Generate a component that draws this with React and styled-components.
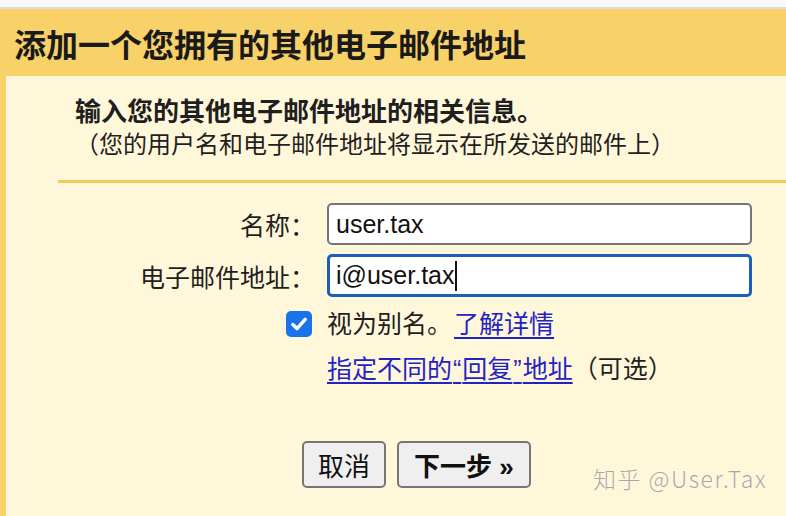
import React from 'react';
import styled, { createGlobalStyle } from 'styled-components';

const GlobalStyle = createGlobalStyle`
  html, body {
    margin: 0;
    padding: 0;
    background: #fff7da;
  }
  body {
    font-family: "Liberation Sans", "Noto Sans CJK SC", sans-serif;
    color: #1f1f1f;
  }
`;

const Page = styled.div`
  position: relative;
  width: 786px;
  height: 516px;
  overflow: hidden;
  display: flex;
  flex-direction: column;
  background: #fff7da;
`;

const TopStrip = styled.div`
  height: 7px;
  background: #f8f8f8;
  border-bottom: 2px solid #dcdcdc;
`;

const Header = styled.h1`
  margin: 0;
  height: 67px;
  display: flex;
  align-items: center;
  padding: 0 0 0 14px;
  background: #f8d169;
  font-family: "Noto Sans CJK SC", sans-serif;
  font-size: 32px;
  font-weight: 700;
  color: #1a1a1a;
`;

const Body = styled.div`
  flex: 1;
  border-left: 6px solid #f8d169;
  display: flex;
  flex-direction: column;
`;

const Intro = styled.div`
  padding: 17px 0 0 69px;
`;

const IntroTitle = styled.div`
  font-family: "Noto Sans CJK SC", sans-serif;
  font-size: 26px;
  font-weight: 700;
  line-height: 34px;
`;

const IntroNote = styled.div`
  font-family: "Noto Sans CJK SC", sans-serif;
  font-size: 24px;
  line-height: 31px;
`;

const Divider = styled.div`
  margin: 22px 0 0 52px;
  height: 3px;
  background: #f1cb5c;
`;

const Form = styled.div`
  display: grid;
  grid-template-columns: 309px 425px;
  column-gap: 12px;
  margin-top: 20px;
  align-items: center;
`;

const Label = styled.div`
  text-align: right;
  font-size: 25px;
  margin-top: ${(p) => p.$top || 0}px;
`;

const Field = styled.div`
  box-sizing: border-box;
  height: ${(p) => (p.$focused ? 43 : 42)}px;
  margin-top: ${(p) => p.$top || 0}px;
  display: flex;
  align-items: center;
  padding: 0 ${(p) => (p.$focused ? 6 : 7)}px;
  background: #fff;
  border: ${(p) => (p.$focused ? '3px solid #1a5fc0' : '2px solid #767676')};
  border-radius: 5px;
  font-size: 25px;
  color: #111;
`;

const Caret = styled.span`
  display: inline-block;
  width: 2px;
  height: 30px;
  background: #111;
  margin-left: 1px;
`;

const CheckCell = styled.div`
  display: flex;
  justify-content: flex-end;
  padding-right: 3px;
  margin-top: ${(p) => p.$top || 0}px;
`;

const CheckBox = styled.span`
  width: 26px;
  height: 26px;
  border-radius: 5px;
  background: #1a73e8;
  display: flex;
  align-items: center;
  justify-content: center;
`;

const Line = styled.div`
  font-size: 25px;
  line-height: 30px;
  margin-top: ${(p) => p.$top || 0}px;
`;

const Link = styled.a`
  color: #2323c4;
  text-decoration: underline;
  text-underline-offset: 4px;
  text-decoration-thickness: 2px;
  margin-left: ${(p) => p.$gap || 0}px;
`;

const Quote = styled.span`
  font-family: "Liberation Sans", sans-serif;
  padding: 0 1px;
`;

const Buttons = styled.div`
  display: flex;
  gap: 11px;
  margin: 57px 0 0 296px;
`;

const Button = styled.button`
  box-sizing: border-box;
  height: 47px;
  padding: 0 ${(p) => (p.$primary ? 15 : 14)}px;
  background: #efefef;
  border: 2px solid #767676;
  border-radius: 5px;
  font-family: "Liberation Sans", "Noto Sans CJK SC", sans-serif;
  font-size: 26px;
  font-weight: ${(p) => (p.$primary ? 700 : 400)};
  color: #111;
`;

const Watermark = styled.div`
  position: absolute;
  right: 19px;
  bottom: 21px;
  font-family: "Noto Sans CJK SC", sans-serif;
  font-size: 23px;
  font-weight: 300;
  color: rgba(140, 140, 140, 0.75);
  letter-spacing: 1.5px;
  text-shadow: 0 0 1px rgba(255, 255, 255, 0.8);
`;

const Check = () => (
  <svg width="18" height="18" viewBox="0 0 18 18">
    <path d="M2.8 9.6 L7 13.6 L15.2 4.4" fill="none" stroke="#fff" strokeWidth="3.4" strokeLinecap="round" strokeLinejoin="round" />
  </svg>
);

export default function App() {
  return (
    <Page>
      <GlobalStyle />
      <TopStrip />
      <Header>添加一个您拥有的其他电子邮件地址</Header>
      <Body>
        <Intro>
          <IntroTitle>输入您的其他电子邮件地址的相关信息。</IntroTitle>
          <IntroNote>（您的用户名和电子邮件地址将显示在所发送的邮件上）</IntroNote>
        </Intro>
        <Divider />
        <Form>
          <Label>名称：</Label>
          <Field>user.tax</Field>
          <Label $top={9}>电子邮件地址：</Label>
          <Field $focused $top={9}>
            i@user.tax<Caret />
          </Field>
          <CheckCell $top={12}>
            <CheckBox>
              <Check />
            </CheckBox>
          </CheckCell>
          <Line $top={12}>
            视为别名。<Link href="#" $gap={2}>了解详情</Link>
          </Line>
          <div />
          <Line $top={15}>
            <Link href="#">
              指定不同的<Quote>“</Quote>回复<Quote>”</Quote>地址
            </Link>
            （可选）
          </Line>
        </Form>
        <Buttons>
          <Button>取消</Button>
          <Button $primary>下一步 »</Button>
        </Buttons>
      </Body>
      <Watermark>知乎 @User.Tax</Watermark>
    </Page>
  );
}
